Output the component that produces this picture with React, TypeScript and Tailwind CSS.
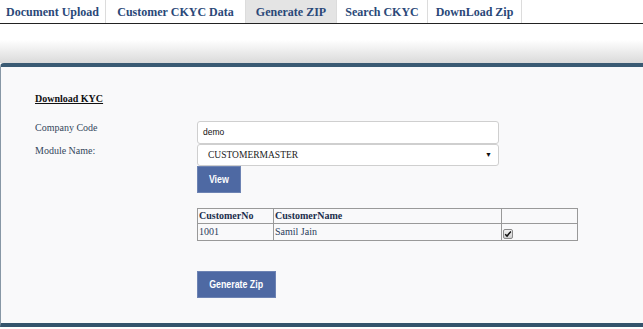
import React from 'react';

const serif = "font-['Liberation_Serif','Times_New_Roman',serif]";
const sans = "font-['Liberation_Sans','Arial',sans-serif]";

const tabs = [
  { label: 'Document Upload', width: 'w-[106px]' },
  { label: 'Customer CKYC Data', width: 'w-[140px]' },
  { label: 'Generate ZIP', width: 'w-[91px]', active: true },
  { label: 'Search CKYC', width: 'w-[91px]' },
  { label: 'DownLoad Zip', width: 'w-[94px]' },
];

const Checkmark = () => (
  <span className="inline-flex h-[10px] w-[10px] items-center justify-center rounded-[2px] border border-[#8a8a8a] bg-gradient-to-b from-[#f2f2f2] to-[#cfcfcf]">
    <svg viewBox="0 0 10 10" className="h-[8px] w-[8px]">
      <path d="M1.5 5.2 L3.8 7.6 L8.6 1.8" fill="none" stroke="#111" strokeWidth="1.8" />
    </svg>
  </span>
);

const BlueButton = ({ label, width }: { label: string; width: string }) => (
  <button className={`flex h-[27px] ${width} items-center justify-center border border-[#6d83b3] bg-[#4e69a3] ${sans} text-[10.5px] font-bold text-white`}>
    <span className="inline-block scale-x-[0.84] whitespace-nowrap">{label}</span>
  </button>
);

export default function App() {
  return (
    <div className="h-[329px] w-[643px] overflow-hidden bg-white">
      {/* tab strip */}
      <div className="flex h-[24px] border-b border-[#222]">
        {tabs.map((t) => (
          <div
            key={t.label}
            className={`${t.width} flex items-center justify-center border-r border-[#dcdcdc] ${serif} text-[12px] font-bold text-[#2a4878] ${
              t.active ? 'bg-[#e4e4e4]' : 'bg-white'
            }`}
          >
            {t.label}
          </div>
        ))}
      </div>

      <div className="h-[16px]" />
      <div className="h-[23px] bg-gradient-to-b from-white to-[#dadada]" />

      {/* panel */}
      <div className="h-[264px] w-[660px] rounded-tl-[4px] border-t-[4px] border-b-[4px] border-l border-t-[#3a5a73] border-b-[#34546c] border-l-[#8797a5] bg-[#f9f9fa] pl-[34px] pt-[26px]">
        <div className={`${serif} text-[10px] leading-[12px] font-bold text-[#111] underline`}>Download KYC</div>

        <div className="mt-[16px] flex">
          <div className={`w-[162px] ${serif} text-[10px] leading-[14px] text-[#34475c]`}>Company Code</div>
          <div className={`flex h-[23px] w-[302px] items-center rounded-[3px] border border-[#cfcfcf] bg-white pl-[5px] ${sans} text-[8.5px] text-[#111]`}>
            demo
          </div>
        </div>

        <div className="flex">
          <div className={`w-[162px] ${serif} text-[10px] leading-[14px] text-[#34475c]`}>Module Name:</div>
          <div className={`flex h-[22px] w-[302px] items-center justify-between rounded-[3px] border border-[#cfcfcf] bg-white pl-[10px] pr-[6px] ${serif} text-[9.5px] text-[#222]`}>
            <span>CUSTOMERMASTER</span>
            <span className="text-[7px] text-[#111]">▼</span>
          </div>
        </div>

        <div className="ml-[162px]">
          <BlueButton label="View" width="w-[44px]" />
        </div>

        <table className={`ml-[162px] mt-[15px] w-[381px] border-collapse ${serif} text-[10px]`}>
          <tbody>
            <tr className="h-[15px]">
              <td className="w-[76px] border border-[#999] pl-[1px] font-bold leading-[12px] text-[#1c2f4d]">CustomerNo</td>
              <td className="w-[228px] border border-[#999] pl-[1px] font-bold leading-[12px] text-[#1c2f4d]">CustomerName</td>
              <td className="border border-[#999]" />
            </tr>
            <tr className="h-[17px]">
              <td className="border border-[#999] pl-[1px] leading-[12px] text-[#2a3d5c]">1001</td>
              <td className="border border-[#999] pl-[1px] leading-[12px] text-[#2a3d5c]">Samil Jain</td>
              <td className="border border-[#999] pb-[1px] pl-[1px] align-bottom leading-[0]">
                <Checkmark />
              </td>
            </tr>
          </tbody>
        </table>

        <div className="ml-[162px] mt-[30px]">
          <BlueButton label="Generate Zip" width="w-[79px]" />
        </div>
      </div>
    </div>
  );
}
